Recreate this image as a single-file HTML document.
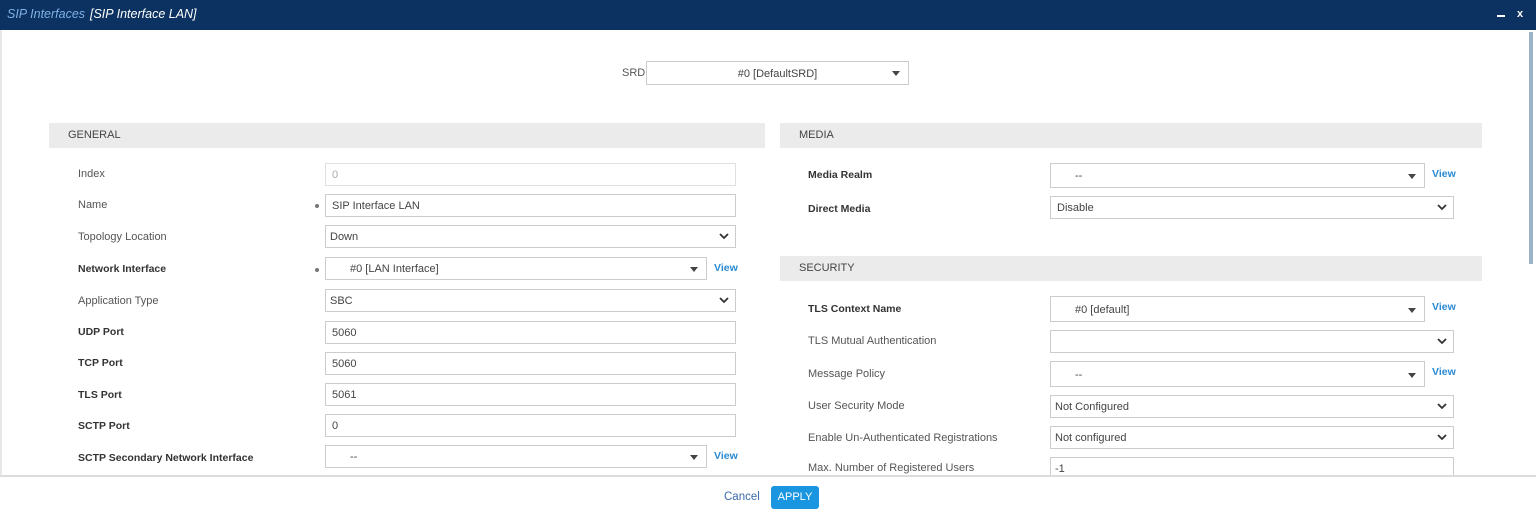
<!DOCTYPE html>
<html><head><meta charset="utf-8"><style>
*{box-sizing:border-box;margin:0;padding:0}
body{width:1536px;height:518px;overflow:hidden;background:#fff;font-family:"Liberation Sans",sans-serif;font-size:11px;color:#555;position:relative}
.a{position:absolute}
.hdr{left:0;top:0;width:1536px;height:30px;background:#0b3260}
.sec{background:#ebebeb;height:25px;line-height:25px;padding-left:19px;color:#444;font-size:11px}
.lbl{line-height:14px;white-space:nowrap;color:#555}
.b{color:#333;font-weight:bold;font-size:10.5px}
.in{height:23px;border:1px solid #ccc;background:#fff;line-height:23px;padding-left:6px;color:#444;white-space:nowrap}
.dis{color:#aaa;border-color:#e0e0e0}
.chev{position:absolute;right:6px;top:7px}
.tri{position:absolute;right:8px;top:9px;width:0;height:0;border-left:4px solid transparent;border-right:4px solid transparent;border-top:5px solid #444}
.view{color:#2a8ad4;font-weight:bold;font-size:10.5px}
.dot{width:4px;height:4px;border-radius:2px;background:#777}
</style></head><body>
<div class="a hdr"></div>
<div class="a" style="left:7px;top:7px;color:#7fb0e6;font-style:italic;font-size:12.5px">SIP Interfaces</div>
<div class="a" style="left:90px;top:7px;color:#fff;font-style:italic;font-size:12.5px">[SIP Interface LAN]</div>
<div class="a" style="left:1497px;top:15px;width:8px;height:2px;background:#fff"></div>
<div class="a" style="left:1517px;top:8px;color:#fff;font-size:11px;font-weight:bold">x</div>
<div class="a" style="left:1529px;top:32px;width:4px;height:232px;background:#9cb3c8"></div>
<div class="a" style="left:0;top:30px;width:2px;height:445px;background:#e8e8e8"></div>

<div class="a lbl" style="left:622px;top:66px">SRD</div>
<div class="a in" style="left:646px;top:61px;width:263px;height:24px;text-align:center;padding:0;line-height:24px">#0 [DefaultSRD]<span class="tri"></span></div>

<div class="a sec" style="left:49px;top:123px;width:716px">GENERAL</div>
<div class="a sec" style="left:780px;top:123px;width:702px">MEDIA</div>
<div class="a sec" style="left:780px;top:256px;width:702px">SECURITY</div>

<div class="a lbl" style="left:78px;top:167px">Index</div>
<div class="a in dis" style="left:325px;top:163px;width:411px">0</div>
<div class="a lbl" style="left:78px;top:198px">Name</div>
<div class="a dot" style="left:315px;top:204px"></div>
<div class="a in" style="left:325px;top:194px;width:411px">SIP Interface LAN</div>
<div class="a lbl" style="left:78px;top:230px">Topology Location</div>
<div class="a in" style="left:325px;top:225px;width:411px;padding-left:4px">Down<svg class="chev" width="10" height="7"><polyline points="1,1 5,5 9,1" fill="none" stroke="#333" stroke-width="1.8"/></svg></div>
<div class="a lbl b" style="left:78px;top:262px">Network Interface</div>
<div class="a dot" style="left:315px;top:268px"></div>
<div class="a in" style="left:325px;top:257px;width:382px;padding-left:24px">#0 [LAN Interface]<span class="tri"></span></div>
<div class="a view" style="left:714px;top:262px">View</div>
<div class="a lbl" style="left:78px;top:294px">Application Type</div>
<div class="a in" style="left:325px;top:289px;width:411px;padding-left:4px">SBC<svg class="chev" width="10" height="7"><polyline points="1,1 5,5 9,1" fill="none" stroke="#333" stroke-width="1.8"/></svg></div>
<div class="a lbl b" style="left:78px;top:325px">UDP Port</div>
<div class="a in" style="left:325px;top:321px;width:411px">5060</div>
<div class="a lbl b" style="left:78px;top:356px">TCP Port</div>
<div class="a in" style="left:325px;top:352px;width:411px">5060</div>
<div class="a lbl b" style="left:78px;top:388px">TLS Port</div>
<div class="a in" style="left:325px;top:383px;width:411px">5061</div>
<div class="a lbl b" style="left:78px;top:419px">SCTP Port</div>
<div class="a in" style="left:325px;top:414px;width:411px">0</div>
<div class="a lbl b" style="left:78px;top:451px">SCTP Secondary Network Interface</div>
<div class="a in" style="left:325px;top:445px;width:382px;padding-left:24px">--<span class="tri"></span></div>
<div class="a view" style="left:714px;top:450px">View</div>

<div class="a lbl b" style="left:808px;top:168px">Media Realm</div>
<div class="a in" style="left:1050px;top:163px;width:375px;height:25px;padding-left:24px;line-height:25px">--<span class="tri" style="top:10px"></span></div>
<div class="a view" style="left:1432px;top:168px">View</div>
<div class="a lbl b" style="left:808px;top:202px">Direct Media</div>
<div class="a in" style="left:1050px;top:196px;width:404px">Disable<svg class="chev" width="10" height="7"><polyline points="1,1 5,5 9,1" fill="none" stroke="#333" stroke-width="1.8"/></svg></div>

<div class="a lbl b" style="left:808px;top:302px">TLS Context Name</div>
<div class="a in" style="left:1050px;top:296px;width:375px;height:26px;padding-left:24px;line-height:26px">#0 [default]<span class="tri" style="top:11px"></span></div>
<div class="a view" style="left:1432px;top:301px">View</div>
<div class="a lbl" style="left:808px;top:334px">TLS Mutual Authentication</div>
<div class="a in" style="left:1050px;top:330px;width:404px"><svg class="chev" width="10" height="7"><polyline points="1,1 5,5 9,1" fill="none" stroke="#333" stroke-width="1.8"/></svg></div>
<div class="a lbl" style="left:808px;top:367px">Message Policy</div>
<div class="a in" style="left:1050px;top:361px;width:375px;height:26px;padding-left:24px;line-height:26px">--<span class="tri" style="top:11px"></span></div>
<div class="a view" style="left:1432px;top:366px">View</div>
<div class="a lbl" style="left:808px;top:399px">User Security Mode</div>
<div class="a in" style="left:1050px;top:395px;width:404px;padding-left:4px">Not Configured<svg class="chev" width="10" height="7"><polyline points="1,1 5,5 9,1" fill="none" stroke="#333" stroke-width="1.8"/></svg></div>
<div class="a lbl" style="left:808px;top:431px">Enable Un-Authenticated Registrations</div>
<div class="a in" style="left:1050px;top:426px;width:404px;padding-left:4px">Not configured<svg class="chev" width="10" height="7"><polyline points="1,1 5,5 9,1" fill="none" stroke="#333" stroke-width="1.8"/></svg></div>
<div class="a lbl" style="left:808px;top:461px">Max. Number of Registered Users</div>
<div class="a in" style="left:1050px;top:457px;width:404px;padding-left:4px">-1</div>

<div class="a" style="left:0;top:475px;width:1536px;height:43px;background:#fff;border-top:2px solid #dcdcdc"></div>
<div class="a" style="left:724px;top:491px;color:#3a6aa8;font-size:11.5px">Cancel</div>
<div class="a" style="left:771px;top:486px;width:48px;height:23px;background:#1a96e0;border-radius:3px;color:#fff;font-size:11px;line-height:23px;text-align:center">APPLY</div>
</body></html>
